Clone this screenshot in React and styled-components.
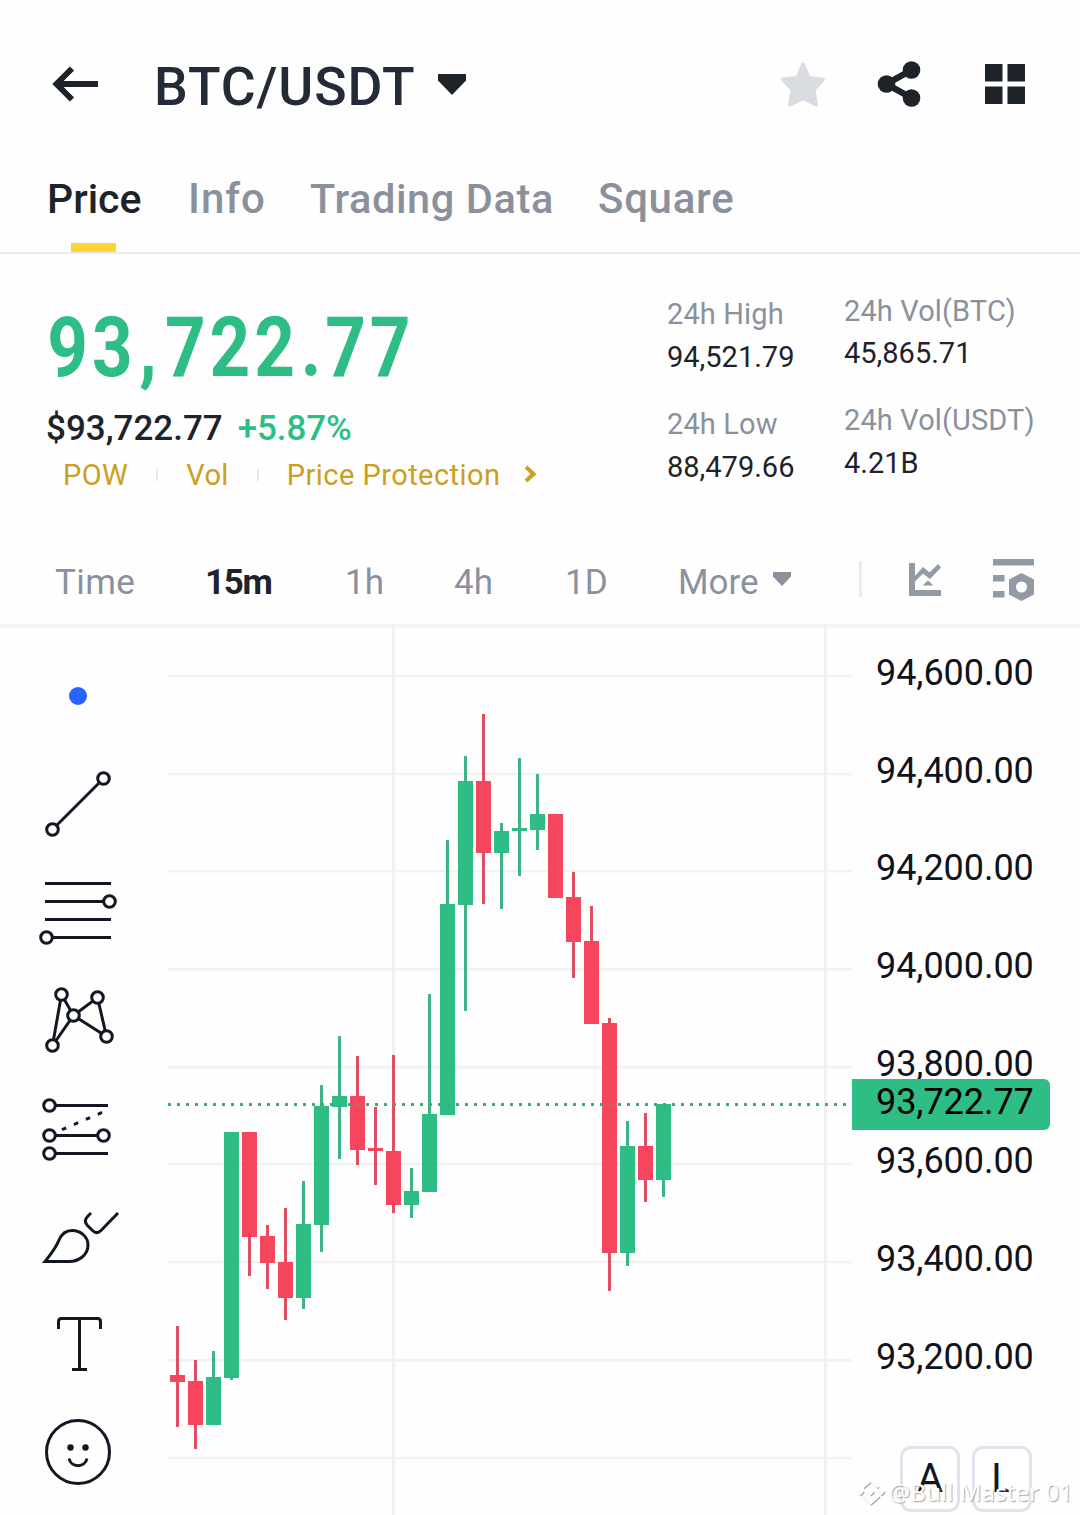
import styled, { createGlobalStyle, css } from 'styled-components';

const colors = {
  ink: '#1e2329',
  title: '#242b38',
  grey: '#8a919d',
  icon: '#929aa5',
  green: '#2ebd85',
  red: '#f6465d',
  gold: '#cb9f20',
  yellow: '#fcd535',
  chartInk: '#131722',
};

const GlobalStyle = createGlobalStyle`
  * {
    box-sizing: border-box;
  }

  body {
    margin: 0;
    background: #fefefe;
    font-family: Roboto, 'Liberation Sans', sans-serif;
  }
`;

const Screen = styled.main`
  width: 1080px;
  height: 1515px;
  overflow: hidden;
  display: flex;
  flex-direction: column;
`;

const Header = styled.header`
  height: 168px;
  padding: 0 51px 0 52px;
  display: flex;
  align-items: center;
`;

const Pair = styled.h1`
  margin: 5px 0 0 56px;
  width: 284px;
  font-size: 53.5px;
  font-weight: 500;
  letter-spacing: 0.9px;
  color: ${colors.title};
`;

const PairCaret = styled.svg`
  width: 28px;
  height: 22px;
  margin-top: 2px;
`;

const HeaderActions = styled.div`
  margin-left: auto;
  display: flex;
  align-items: center;
`;

const ActionIcon = styled.svg`
  width: 48px;
  height: 48px;
  margin-left: ${p => p.$gap || 0}px;
  overflow: visible;
`;

const Tabs = styled.nav`
  height: 86px;
  padding-left: 47px;
  border-bottom: 2px solid #eaebed;
  display: flex;
`;

const Tab = styled.div`
  width: ${p => p.$width}px;
  font-size: ${p => p.$size || 41}px;
  font-weight: 500;
  line-height: 62px;
  letter-spacing: ${p => p.$spacing || 0}px;
  white-space: nowrap;
  color: ${colors.grey};

  ${p => p.$active && css`
    color: ${colors.ink};

    &::after {
      content: '';
      display: block;
      width: 45px;
      height: 9px;
      margin: 13px 0 0 24px;
      background: ${colors.yellow};
    }
  `}
`;

const Summary = styled.section`
  height: 286px;
  display: flex;
`;

const PriceBlock = styled.div`
  width: 667px;
  padding: 46px 0 0 46px;
`;

const LastPrice = styled.div`
  height: 96px;
  padding-left: 1.5px;
  line-height: 95px;
  font-size: 82.5px;
  font-weight: 700;
  letter-spacing: 4.6px;
  color: ${colors.green};
  transform: scaleX(0.86);
  transform-origin: left;
`;

const Comma = styled.span`
  margin: 0 5px 0 3px;
`;

const Point = styled.span`
  margin: 0 0 0 2px;
`;

const FiatRow = styled.div`
  height: 64px;
  display: flex;
  align-items: center;
  gap: 15px;
  font-size: 35px;
  font-weight: 500;
  color: ${colors.ink};
`;

const Change = styled.span`
  color: ${colors.green};
  letter-spacing: -0.1px;
`;

const TagRow = styled.div`
  height: 30px;
  padding-left: 17px;
  display: flex;
  align-items: center;
  font-size: 29px;
  color: ${colors.gold};
`;

const Tag = styled.span`
  letter-spacing: ${p => p.$spacing || 0}px;
  white-space: nowrap;
`;

const TagDivider = styled.i`
  width: 2px;
  height: 12px;
  margin: 0 28px;
  background: #e6e8ea;
`;

const TagArrow = styled.svg`
  width: 13px;
  height: 18px;
  margin: 0 0 2px 24px;
`;

const StatColumn = styled.dl`
  width: ${p => p.$width}px;
  margin: 0;
  padding-top: ${p => p.$top}px;
  white-space: nowrap;
  font-size: 29px;
  line-height: 42px;
`;

const StatLabel = styled.dt`
  color: ${colors.grey};
  letter-spacing: 0.12px;
`;

const StatValue = styled.dd`
  margin: ${p => (p.$tight ? 0 : 1)}px 0 25px;
  color: ${colors.ink};
`;

const Timeframes = styled.nav`
  height: 88px;
  padding-left: 55px;
  border-bottom: 4px solid #f5f5f6;
  display: flex;
  align-items: center;
`;

const Frame = styled.span`
  width: ${p => p.$width}px;
  font-size: 35px;
  font-weight: ${p => (p.$active ? 700 : 400)};
  letter-spacing: ${p => p.$spacing || 0}px;
  color: ${p => (p.$active ? colors.ink : colors.grey)};
`;

const FrameIcon = styled.svg`
  margin-left: ${p => p.$gap || 0}px;
  margin-bottom: ${p => p.$lift}px;
`;

const FrameDivider = styled.i`
  width: 3px;
  height: 36px;
  margin: 0 47px 6px 68px;
  background: #e9ebed;
`;

const ChartArea = styled.section`
  position: relative;
  height: 887px;
  display: flex;
`;

const Toolbar = styled.aside`
  width: 168px;
  padding: 26px 0 0 36px;
  display: flex;
  flex-direction: column;
  gap: 24px;
`;

const ToolIcon = styled.svg`
  width: 84px;
  height: 84px;
  flex: none;
  fill: none;
  stroke: ${colors.chartInk};
  stroke-width: 3;
`;

const Plot = styled.svg`
  width: 684px;
  height: 887px;
  flex: none;
  overflow: visible;
`;

const Axis = styled.div`
  position: relative;
  width: 228px;
  padding: 24px 0 0 24px;
  display: flex;
  flex-direction: column;
  gap: 55.7px;
  font-size: 36px;
  line-height: 42px;
  letter-spacing: -0.05px;
  color: #0f131b;
`;

const PriceTag = styled.div`
  position: absolute;
  top: 451px;
  left: 0;
  width: 198px;
  height: 51px;
  padding-left: 24px;
  line-height: 46px;
  border-radius: 0 6px 6px 0;
  color: #000;
  background: ${colors.green};
`;

const ScaleButtons = styled.div`
  position: absolute;
  top: 818px;
  left: 48px;
  display: flex;
  gap: 12px;
`;

const ScaleButton = styled.button`
  width: 60px;
  height: 66px;
  padding: 0;
  border: 3px solid #e0e3eb;
  border-radius: 11px;
  background: #fff;
  color: ${colors.chartInk};
  font: 400 40px/60px Roboto, sans-serif;
`;

const Watermark = styled.div`
  position: absolute;
  right: 7px;
  bottom: 7px;
  display: flex;
  align-items: center;
  gap: 4px;
  font-family: 'Noto Sans', sans-serif;
  font-size: 24px;
  line-height: 32px;
  letter-spacing: 0.08px;
  color: #fff;
  text-shadow: 1px 1px 1px #a3a5aa;
  white-space: nowrap;

  svg {
    filter: drop-shadow(1px 1px 0.5px #a3a5aa);
  }
`;

// x is derived from the index, y values are offsets from the screen top
const CHART_TOP = 628;
const candles = [
  [1326, 1375, 1382, 1427, 0],
  [1360, 1381, 1425, 1449, 0],
  [1351, 1377, 1425, 1425, 1],
  [1132, 1132, 1378, 1380, 1],
  [1132, 1132, 1237, 1276, 0],
  [1225, 1236, 1263, 1289, 0],
  [1208, 1262, 1298, 1320, 0],
  [1181, 1224, 1298, 1309, 1],
  [1085, 1106, 1225, 1252, 1],
  [1036, 1096, 1107, 1159, 1],
  [1056, 1096, 1150, 1165, 0],
  [1107, 1148, 1151, 1185, 0],
  [1055, 1151, 1205, 1213, 0],
  [1168, 1191, 1205, 1218, 1],
  [994, 1114, 1192, 1192, 1],
  [840, 904, 1115, 1115, 1],
  [756, 781, 905, 1011, 1],
  [714, 781, 853, 904, 0],
  [823, 831, 853, 909, 1],
  [758, 828, 831, 876, 1],
  [774, 814, 830, 850, 1],
  [814, 814, 898, 898, 0],
  [872, 897, 942, 978, 0],
  [906, 941, 1024, 1024, 0],
  [1018, 1023, 1253, 1291, 0],
  [1121, 1146, 1253, 1266, 1],
  [1113, 1146, 1180, 1202, 0],
  [1104, 1104, 1180, 1197, 1],
];

const gridRows = [676, 774, 871, 969, 1067, 1164, 1262, 1360, 1458];

const axisLabels = [
  '94,600.00',
  '94,400.00',
  '94,200.00',
  '94,000.00',
  '93,800.00',
  '93,600.00',
  '93,400.00',
  '93,200.00',
];

const Candle = ({ index, data }) => {
  const [high, top, bottom, low, up] = data;
  const x = 2 + index * 18;
  return (
    <g>
      <rect
        x={ x + 6 }
        y={ high - CHART_TOP }
        width="3"
        height={ low - high }
        fill={ up ? '#3fb286' : '#e04e63' }
      />
      <rect
        x={ x }
        y={ top - CHART_TOP }
        width="15"
        height={ bottom - top }
        fill={ up ? colors.green : colors.red }
      />
    </g>
  );
};

const CandleChart = () => (
  <Plot viewBox="0 0 684 887">
    { gridRows.map(y => (
      <rect key={ y } x="0" y={ y - CHART_TOP - 1 } width="684" height="2.5" fill="#f1f3f3" />
    )) }
    <rect x="224" y="-4" width="3" height="891" fill="#eff1f2" />
    <rect x="656" y="-4" width="3" height="891" fill="#eff1f2" />
    { candles.map((c, i) => <Candle key={ i } index={ i } data={ c } />) }
    <path d="M0 476.5H684" stroke="#3fa883" strokeWidth="3" strokeDasharray="3 6" />
  </Plot>
);

const Nodes = ({ points }) => points.map(([x, y]) => (
  <circle key={ `${x}-${y}` } cx={ x } cy={ y } r="5.8" fill="#fff" />
));

const Tools = () => (
  <Toolbar>
    <ToolIcon viewBox="0 0 84 84">
      <circle cx="42" cy="42" r="9" fill="#2962ff" stroke="none" />
    </ToolIcon>
    <ToolIcon viewBox="0 0 84 84">
      <path d="M16.5 67.5L67.5 16.5" />
      <Nodes points={ [[16.5, 67.5], [67.5, 16.5]] } />
    </ToolIcon>
    <ToolIcon viewBox="0 0 84 84">
      <path d="M9 13.5H75M9 31.5H73M9 49.5H75M10 67.5H75" />
      <Nodes points={ [[73.5, 31.5], [10.5, 67.5]] } />
    </ToolIcon>
    <ToolIcon viewBox="0 0 84 84">
      <path d="M16.5 67.5L25.5 16.5L37.5 37.5L61.5 19.5L70.5 58.5L37.5 37.5Z" />
      <Nodes points={ [[25.5, 16.5], [61.5, 19.5], [37.5, 37.5], [70.5, 58.5], [16.5, 67.5]] } />
    </ToolIcon>
    <ToolIcon viewBox="0 0 84 84">
      <path d="M14 19.5H72M14 49.5H67M14 67.5H72" />
      <path d="M26 43.7L68 25.6" strokeDasharray="4.6 8.4" />
      <Nodes points={ [[13.5, 19.5], [13.5, 49.5], [67.5, 49.5], [13.5, 67.5]] } />
    </ToolIcon>
    <ToolIcon viewBox="0 0 84 84">
      <path d="M9 67.5C15 60 20 54 23 46C26 39 30 36.5 36 36.5C45 36.5 52 43 52 51C52 61 43 67.5 33 67.5Z" />
      <path d="M55 19L52 22C49 25 48.5 28 51 31L56.5 36.5C59.5 39.5 62 39.5 65 36.5L82 19" />
    </ToolIcon>
    <ToolIcon viewBox="0 0 84 84">
      <path d="M22.5 27V19.5Q22.5 16.5 25.5 16.5H61.5Q64.5 16.5 64.5 19.5V27M43.5 16.5V67.5M36 67.5H51" />
    </ToolIcon>
    <ToolIcon viewBox="0 0 84 84">
      <circle cx="42" cy="42" r="31.5" />
      <circle cx="34.5" cy="37.5" r="3.2" fill={ colors.chartInk } stroke="none" />
      <circle cx="49.5" cy="37.5" r="3.2" fill={ colors.chartInk } stroke="none" />
      <path d="M33 48.5C35 58 49 58 51 48.5" />
    </ToolIcon>
  </Toolbar>
);

const App = () => (
  <Screen>
    <GlobalStyle />
    <Header>
      <svg width="46" height="36" viewBox="0 0 46 36" fill="none" stroke={ colors.ink } strokeWidth="6">
        <path d="M46 18H5M20 2.5L4.5 18L20 33.5" />
      </svg>
      <Pair>BTC/USDT</Pair>
      <PairCaret viewBox="0 0 28 22" fill={ colors.ink }>
        <path d="M0 0H28V6.5L14 21L0 6.5Z" />
      </PairCaret>
      <HeaderActions>
        <ActionIcon viewBox="0 0 48 48">
          <path
            d="M24 4.5L29.5 18L44 19.5L34.5 30L37 44.500L24 38L11 44.500L13.500 30L4 19.500L18.500 18Z"
            fill="#d9dce1"
            stroke="#d9dce1"
            strokeWidth="4"
            strokeLinejoin="round"
          />
        </ActionIcon>
        <ActionIcon $gap={ 48 } viewBox="0 0 48 48">
          <path d="M36.5 10L11.5 24L36.5 38" fill="none" stroke={ colors.ink } strokeWidth="6.5" />
          <circle cx="11.5" cy="24" r="8.8" fill={ colors.ink } />
          <circle cx="36.5" cy="10" r="8.8" fill={ colors.ink } />
          <circle cx="36.5" cy="38" r="8.8" fill={ colors.ink } />
        </ActionIcon>
        <ActionIcon $gap={ 58 } viewBox="0 0 48 48" fill={ colors.ink }>
          <path d="M4 4H21.5V21.5H4ZM26.5 4H44V21.5H26.5ZM4 26.5H21.5V44H4ZM26.5 26.5H44V44H26.5Z" />
        </ActionIcon>
      </HeaderActions>
    </Header>

    <Tabs>
      <Tab $width={ 141 } $active>Price</Tab>
      <Tab $width={ 122 } $size={ 42 } $spacing={ 1 }>Info</Tab>
      <Tab $width={ 288 } $size={ 41.5 } $spacing={ 0.6 }>Trading Data</Tab>
      <Tab $width={ 150 } $size={ 42 } $spacing={ 0.7 }>Square</Tab>
    </Tabs>

    <Summary>
      <PriceBlock>
        <LastPrice>93<Comma>,</Comma>722<Point>.</Point>77</LastPrice>
        <FiatRow>
          <span>$93,722.77</span>
          <Change>+5.87%</Change>
        </FiatRow>
        <TagRow>
          <Tag $spacing={ 0.4 }>POW</Tag>
          <TagDivider />
          <Tag $spacing={ 0.4 }>Vol</Tag>
          <TagDivider />
          <Tag $spacing={ 0.45 }>Price Protection</Tag>
          <TagArrow viewBox="0 0 13 18" fill="none" stroke={ colors.gold } strokeWidth="4">
            <path d="M2 2L9.5 9L2 16" />
          </TagArrow>
        </TagRow>
      </PriceBlock>
      <StatColumn $width={ 177 } $top={ 39 }>
        <StatLabel>24h High</StatLabel>
        <StatValue>94,521.79</StatValue>
        <StatLabel>24h Low</StatLabel>
        <StatValue>88,479.66</StatValue>
      </StatColumn>
      <StatColumn $width={ 220 } $top={ 36 }>
        <StatLabel>24h Vol(BTC)</StatLabel>
        <StatValue $tight>45,865.71</StatValue>
        <StatLabel>24h Vol(USDT)</StatLabel>
        <StatValue>4.21B</StatValue>
      </StatColumn>
    </Summary>

    <Timeframes>
      <Frame $width={ 150 } $spacing={ 0.4 }>Time</Frame>
      <Frame $width={ 140 } $spacing={ -1.3 } $active>15m</Frame>
      <Frame $width={ 109 }>1h</Frame>
      <Frame $width={ 111 }>4h</Frame>
      <Frame $width={ 113 }>1D</Frame>
      <Frame $width={ 95 }>More</Frame>
      <FrameIcon $lift={ 6 } width="18" height="14" viewBox="0 0 18 14" fill={ colors.grey }>
        <path d="M0 0H18V4.5L9 14L0 4.5Z" />
      </FrameIcon>
      <FrameDivider />
      <FrameIcon $lift={ 6 } width="33" height="33" viewBox="0 0 33 33" fill={ colors.icon }>
        <path d="M0 0H6V13L14 4L20.5 9.5L29 1L32 4.5L21 16L14 10.5L6 18.5V27H32V33H0Z" />
        <path d="M19 17.5L24.5 22.5H13.5Z" />
      </FrameIcon>
      <FrameIcon $gap={ 51 } $lift={ 4 } width="42" height="42" viewBox="0 0 42 42" fill={ colors.icon }>
        <path d="M0 0H41V6.5H0ZM0 16H11.5V22.5H0ZM0 32H11.5V38.5H0Z" />
        <path fillRule="evenodd" d="M28.5 14L41 20.5V35.5L28.5 42L16 35.5V20.5ZM28.5 22.5A5.5 5.5 0 1 0 28.5 33.5A5.5 5.5 0 1 0 28.5 22.5Z" />
      </FrameIcon>
    </Timeframes>

    <ChartArea>
      <Tools />
      <CandleChart />
      <Axis>
        { axisLabels.map(label => <span key={ label }>{ label }</span>) }
        <PriceTag>93,722.77</PriceTag>
        <ScaleButtons>
          <ScaleButton type="button">A</ScaleButton>
          <ScaleButton type="button">L</ScaleButton>
        </ScaleButtons>
      </Axis>
      <Watermark>
        <svg width="29" height="25" viewBox="0 0 29 25" fill="none" stroke="#fff" strokeWidth="2">
          <path d="M7 7.5L14.5 1L22 7.5M1 11L4 14L7 11M11.5 11L14.5 14L17.5 11M22 11L25 14L28 11M6 16L14.5 23.5L23 16" />
        </svg>
        @Bull Master 01
      </Watermark>
    </ChartArea>
  </Screen>
);

export default App;
